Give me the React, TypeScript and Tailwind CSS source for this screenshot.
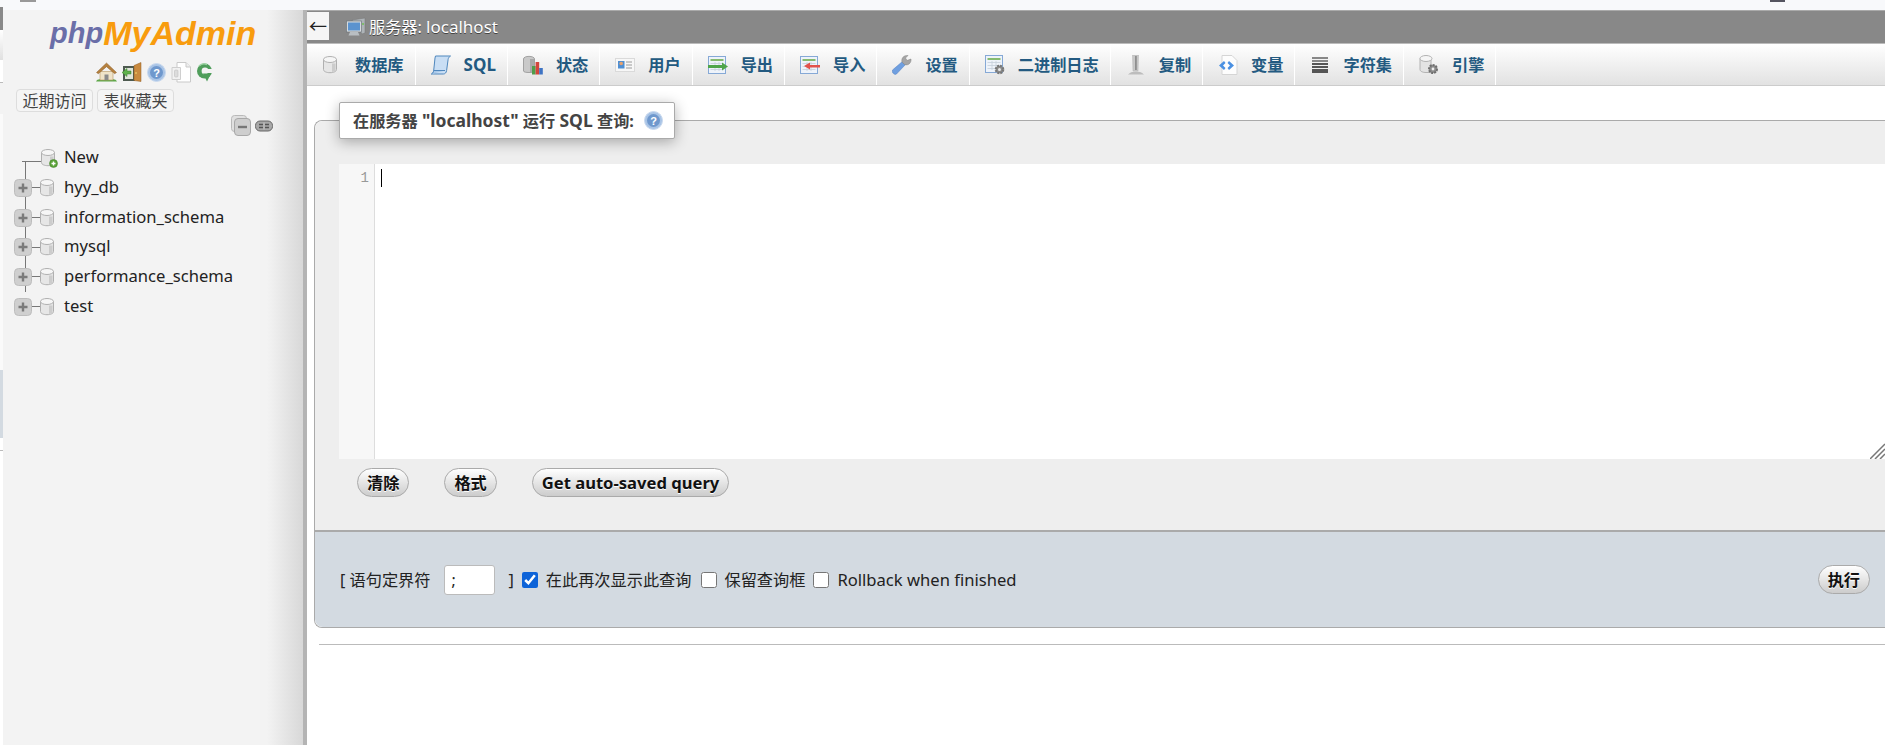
import React from 'react';

const uiFont = { fontFamily: '"Noto Sans", "Noto Sans CJK SC", sans-serif' };

// --- small icons, drawn to follow the phpMyAdmin sprite ---

const DbIcon = ({ plus = false }: { plus?: boolean }) => (
  <svg width="18" height="20" viewBox="1 0 18 20" className="shrink-0">
    <path d="M1.500 4.500v10c0 2 3 3.200 6.500 3.200s6.500-1.200 6.500-3.200v-10z" fill="#e6e6e6" stroke="#b0b0b0" />
    <ellipse cx="8" cy="4.500" rx="6.500" ry="3" fill="#f6f6f6" stroke="#b0b0b0" />
    <path d="M10 8.500h3.500v7.500l-3.500 1z" fill="#cccccc" />
    {plus && (
      <g>
        <circle cx="13.500" cy="15.500" r="4" fill="#5ca33a" stroke="#3f7f25" strokeWidth=".5" />
        <path d="M11.500 15.500h4M13.500 13.500v4" stroke="#fff" strokeWidth="1.400" />
      </g>
    )}
  </svg>
);

const PlusBox = () => (
  <svg width="18" height="18" viewBox="0 0 18 18" className="shrink-0">
    <rect x=".5" y=".5" width="17" height="17" rx="4" fill="#cfcfcf" stroke="#bdbdbd" />
    <path d="M4.500 9h9M9 4.500v9" stroke="#7a7a7a" strokeWidth="2.400" />
  </svg>
);

const HomeIcon = () => (
  <svg width="21" height="20" viewBox="0 0 21 20">
    <path d="M0 19.500c1-2 3-2.500 5-2h11c2-.5 4 0 5 2z" fill="#5fa84a" />
    <path d="M4 9.500h13V18H4z" fill="#efe3c8" stroke="#b79763" strokeWidth=".6" />
    <path d="M8.500 12.500h4V18h-4z" fill="#8a8a8a" />
    <path d="M.5 10.500 10.500 1l10 9.500-1.800 1.200-8.200-7-8.200 7z" fill="#b5813f" stroke="#8d5f29" strokeWidth=".5" />
  </svg>
);

const ExitIcon = () => (
  <svg width="20" height="20" viewBox="0 0 20 20">
    <path d="M1 4h12v15H1z" fill="#4d5a50" />
    <path d="M3 6h8v11H3z" fill="#dfe5da" />
    <path d="M12 3.500 19 .5v19l-7-1z" fill="#c98a3f" stroke="#8e5a20" strokeWidth=".5" />
    <circle cx="14" cy="11" r=".8" fill="#f7e27a" />
    <path d="M0 10.500 5 6.500v2.500h4v3H5v2.500z" fill="#5fb14c" stroke="#3b7d2c" strokeWidth=".5" />
  </svg>
);

const HelpIcon = ({ size = 19 }: { size?: number }) => (
  <svg width={size} height={size} viewBox="0 0 19 19" className="shrink-0">
    <circle cx="9.500" cy="9.500" r="9" fill="#a9c4e6" stroke="#c9d9ee" />
    <circle cx="9.500" cy="9.500" r="6.500" fill="#6f98cd" />
    <text x="9.500" y="13.500" textAnchor="middle" fontSize="11" fontWeight="700" fill="#fff" fontFamily="Liberation Sans">?</text>
  </svg>
);

const DocsIcon = () => (
  <svg width="20" height="21" viewBox="0 0 20 21">
    <path d="M6 .5h9l4.500 4.500v15H6z" fill="#fff" stroke="#c9c9c9" />
    <path d="M15 .5V5h4.500" fill="#eee" stroke="#c9c9c9" />
    <path d="M1 5.500h8.500v12H1z" fill="#f1f1f1" stroke="#cfcfcf" />
    <rect x="3.500" y="8" width="3.500" height="7" rx="1" fill="#dcdcdc" stroke="#b9b9b9" strokeWidth=".5" />
  </svg>
);

const ReloadIcon = () => (
  <svg width="17" height="20" viewBox="0 0 17 20">
    <circle cx="8.500" cy="9" r="7.500" fill="#4f9d5b" />
    <circle cx="9" cy="9" r="3.400" fill="#f3f3f3" />
    <path d="M10 7h7v4h-7z" fill="#f3f3f3" />
    <path d="M7 11.500h8L11 19.500z" fill="#4f9d5b" />
    <path d="M3 4c2-2 5-3 8-1.500" stroke="#9dd4a4" strokeWidth="1.500" fill="none" />
  </svg>
);

const CollapseIcon = () => (
  <svg width="20" height="21" viewBox="0 0 20 21">
    <rect x=".5" y=".5" width="15" height="16" rx="3" fill="#e0e0e0" stroke="#b9b9b9" />
    <rect x="3.500" y="3.500" width="16" height="17" rx="3.500" fill="#cecece" stroke="#a8a8a8" />
    <path d="M7 12h9" stroke="#777" strokeWidth="2.400" />
  </svg>
);

const LinkIcon = () => (
  <svg width="18" height="12" viewBox="0 0 18 12">
    <rect x=".5" y="1" width="17" height="10" rx="4.500" fill="#a8a8a8" stroke="#666" />
    <path d="M4 4.500h10M4 7.500h10" stroke="#555" strokeWidth="1.500" />
    <path d="M8 2.500h2v7H8z" fill="#b5b5b5" />
  </svg>
);

const ServerIcon = () => (
  <svg width="20" height="20" viewBox="0 0 20 20">
    <path d="M6 3 19 1v15l-3 1z" fill="#aeb4b8" stroke="#777" strokeWidth=".5" />
    <rect x=".5" y="4" width="15" height="11" fill="#d6dadd" stroke="#6f777c" strokeWidth=".7" />
    <rect x="2" y="5.500" width="12" height="8" fill="#5b93cf" />
    <path d="M4 15h8l1.500 3.500h-11z" fill="#b9bec2" />
    <circle cx="17" cy="7" r=".9" fill="#6ac04a" />
  </svg>
);

const ScrollIcon = () => (
  <svg width="20" height="20" viewBox="0 0 20 20">
    <path d="M4.500 1H19.500c-1.500 1-2.200 2-2.400 3.500l-1.500 11c-.3 2.200-1.500 3.500-3.200 3.500H.5c1.500-1 2-2 2.200-3.500L4 3z" fill="#c9def4" stroke="#4f87bd" />
    <path d="M.5 19c1.500-1 2-2 2.200-3.500H14" fill="#a9c9ea" stroke="#4f87bd" />
  </svg>
);

const StatusIcon = () => (
  <svg width="20" height="20" viewBox="0 0 20 20">
    <path d="M.5 4c0-3.500 11-3.500 11 0v12c0 2-11 2-11 0z" fill="#c9c9c9" stroke="#a2a2a2" />
    <path d="M7 4h4v13H7z" fill="#a9a9a9" />
    <rect x="9" y="11" width="3.600" height="8.500" fill="#4f9d4a" />
    <rect x="12.600" y="7" width="3.600" height="12.500" fill="#d3453c" />
    <rect x="16.200" y="13" width="3.600" height="6.500" fill="#3f74c4" />
  </svg>
);

const UsersIcon = () => (
  <svg width="20" height="16" viewBox="0 0 20 16">
    <rect x=".5" y="1.500" width="19" height="13" fill="#f7f7f7" stroke="#dadada" />
    <rect x="3" y="4" width="6.500" height="7.500" fill="#4f8fd3" />
    <circle cx="6.200" cy="6.500" r="1.800" fill="#e7a36f" />
    <path d="M11 5h6M11 8h6M11 11h6" stroke="#9a9a9a" strokeWidth="1" />
  </svg>
);

const TableIcon = () => (
  <>
    <rect x=".5" y=".5" width="17" height="17" fill="#eef3fa" stroke="#86a9d6" />
    <path d="M2.500 4h13" stroke="#86bb70" strokeWidth="2" />
    <path d="M2.500 7.500h13M2.500 10.500h13M2.500 13.500h13M7 6v9M11 6v9" stroke="#c5cfdb" strokeWidth=".8" />
  </>
);

const ExportIcon = () => (
  <svg width="20" height="18" viewBox="0 0 20 18">
    <TableIcon />
    <path d="M0 9h14V6.500l6 4-6 4V12H0z" fill="#4fa54a" />
  </svg>
);

const ImportIcon = () => (
  <svg width="20" height="18" viewBox="0 0 20 18">
    <TableIcon />
    <path d="M20 9H10V6.500l-6 3.500 6 3.500V11.500h10z" fill="#e2524c" />
  </svg>
);

const WrenchIcon = () => (
  <svg width="20" height="20" viewBox="0 0 20 20">
    <path d="M.5 15 11 6l3 3-9.500 10c-2 1.500-5-1.500-4-4z" fill="#6f9fe0" stroke="#4f7fc0" strokeWidth=".5" />
    <path d="M10 7c-1-4 2-7 6-6.500L13.500 3 15 5.500l4-1.500c.5 4-3 7-6.500 5.500z" fill="#a5a5a5" stroke="#808080" strokeWidth=".5" />
  </svg>
);

const BinlogIcon = () => (
  <svg width="20" height="20" viewBox="0 0 20 20">
    <TableIcon />
    <circle cx="14.500" cy="14.500" r="3.800" fill="#8a8a8a" stroke="#777" strokeWidth="2" strokeDasharray="2 1" />
    <circle cx="14.500" cy="14.500" r="1.500" fill="#e8e8e8" />
  </svg>
);

const ReplicationIcon = () => (
  <svg width="16" height="20" viewBox="0 0 16 20">
    <path d="M4.500 0h6l-.5 16H5z" fill="#c9c9c9" stroke="#b0b0b0" strokeWidth=".5" />
    <path d="M7 1h1.800v14H7z" fill="#8f8f8f" />
    <path d="M0 19.500c2-2 4-3 8-3s6 1 8 3z" fill="#bdbdbd" />
  </svg>
);

const VariablesIcon = () => (
  <svg width="20" height="20" viewBox="0 0 20 20">
    <path d="M4 .5h10l5 5v14H4z" fill="#fdfdfd" stroke="#d5d5d5" />
    <path d="M6 6 1 10.500 6 15l1.500-2-2.500-2.500L7.500 8z" fill="#4a90e2" />
    <path d="M11 6l5 4.500L11 15l-1.500-2 2.500-2.500L9.500 8z" fill="#4a90e2" />
  </svg>
);

const CharsetIcon = () => (
  <svg width="16" height="16" viewBox="0 0 16 16">
    {[0, 3, 6, 9, 12, 14].map((y) => (
      <rect key={y} x="0" y={y} width="16" height="2" fill={y < 6 ? '#888' : '#555'} />
    ))}
  </svg>
);

const EngineIcon = () => (
  <svg width="20" height="20" viewBox="0 0 20 20">
    <path d="M1 3.500v11c0 2 3 3 6 3h5V3.500z" fill="#e3e3e3" stroke="#b2b2b2" />
    <ellipse cx="7" cy="3.500" rx="6" ry="3" fill="#f5f5f5" stroke="#b2b2b2" />
    <circle cx="14" cy="14" r="4" fill="#8c8c8c" stroke="#6e6e6e" strokeWidth="2" strokeDasharray="2 1" />
    <circle cx="14" cy="14" r="1.400" fill="#eee" />
  </svg>
);

const tabs = [
  { label: '数据库', icon: <DbIcon /> },
  { label: 'SQL', icon: <ScrollIcon />, latin: true },
  { label: '状态', icon: <StatusIcon /> },
  { label: '用户', icon: <UsersIcon /> },
  { label: '导出', icon: <ExportIcon /> },
  { label: '导入', icon: <ImportIcon /> },
  { label: '设置', icon: <WrenchIcon /> },
  { label: '二进制日志', icon: <BinlogIcon /> },
  { label: '复制', icon: <ReplicationIcon /> },
  { label: '变量', icon: <VariablesIcon /> },
  { label: '字符集', icon: <CharsetIcon /> },
  { label: '引擎', icon: <EngineIcon /> },
];

const databases = ['hyy_db', 'information_schema', 'mysql', 'performance_schema', 'test'];

const PillButton = ({ children }: { children: React.ReactNode }) => (
  <button className="h-[29px] px-[9px] pt-[1px] rounded-full border border-[#aaaaaa] bg-linear-to-b from-white to-[#cccccc] text-[16.200px] leading-none font-bold text-[#111111] [text-shadow:0_1px_0_#fff]">
    {children}
  </button>
);

const Sidebar = () => (
  <aside className="w-[300px] shrink-0 bg-[linear-gradient(to_right,#f3f3f3_88%,#d8d8d8_100%)] flex flex-col">
    {/* logo */}
    <div className="h-[41px] pl-[47px] flex items-end whitespace-nowrap italic font-bold" style={{ fontFamily: '"Liberation Sans", sans-serif' }}>
      <span className="text-[29px] leading-[36px] text-[#6a6ea8]">php</span>
      <span className="text-[34px] leading-[36px] text-[#f89c0e]">MyAdmin</span>
    </div>
    <div className="h-[20px] mt-[11px] pl-[93px] flex items-center gap-[5px]">
      <HomeIcon />
      <ExitIcon />
      <HelpIcon />
      <DocsIcon />
      <ReloadIcon />
    </div>
    <div className="mt-[7px] pl-[13px] flex gap-[4px] text-[16px] text-[#444444]">
      <span className="h-[23px] w-[77px] flex items-center justify-center rounded-[4px] border border-[#dddddd] bg-[#f5f5f5]">近期访问</span>
      <span className="h-[23px] w-[77px] flex items-center justify-center rounded-[4px] border border-[#dddddd] bg-[#f5f5f5]">表收藏夹</span>
    </div>
    <div className="mt-[3px] pl-[228px] h-[21px] flex items-center gap-[4px]">
      <CollapseIcon />
      <LinkIcon />
    </div>
    {/* database tree */}
    <div className="relative mt-[7px] pl-[11px] text-[16.600px] text-[#222222]">
      <div className="absolute left-[22px] top-[19px] h-[130px] w-px bg-[#777777]" />
      <div className="h-[30px] flex items-center">
        <div className="w-[18px] shrink-0" />
        <div className="ml-[-10px] mr-0 w-[19px] h-px bg-[#777777] mt-[6px] shrink-0" />
        <DbIcon plus />
        <span className="ml-[5px] mt-[-1px]">New</span>
      </div>
      {databases.map((name) => (
        <div key={name} className="relative h-[29.700px] flex items-center">
          <PlusBox />
          <div className="w-[8px] h-px bg-[#777777] shrink-0" />
          <DbIcon />
          <span className="ml-[6px] mt-[-1px]">{name}</span>
        </div>
      ))}
    </div>
  </aside>
);

const App = () => (
  <div className="h-[745px] w-full overflow-hidden flex bg-white text-[16.200px]" style={uiFont}>
    {/* sliver of the window behind */}
    <div className="w-[3px] shrink-0 flex flex-col">
      <div className="h-[7px] bg-[#f8f9fb]" />
      <div className="h-[23px] bg-[#888888]" />
      <div className="h-[30px] bg-linear-to-b from-white to-[#e0e0e0]" />
      <div className="h-[23px] bg-white border-b border-[#bbbbbb]" />
      <div className="h-[31px] bg-[#f3f3f3]" />
      <div className="h-[256px] bg-[#fafafa]" />
      <div className="h-[68px] bg-[#d3dae1]" />
      <div className="h-[13px] bg-white border-b border-[#bbbbbb]" />
    </div>

    <div className="flex-1 min-w-0 flex flex-col">
      <div className="h-[10px] shrink-0 bg-[#f8f9fb] flex">
        <div className="ml-[17px] w-[16px] h-[2px] bg-[#999999]" />
        <div className="ml-[1734px] w-[15px] h-[2px] bg-[#555560]" />
      </div>

      <div className="flex-1 min-h-0 flex">
        <Sidebar />
        <div className="w-[4px] shrink-0 bg-[#b4b4b4]" />

        <main className="flex-1 min-w-0 flex flex-col overflow-hidden">
          {/* server breadcrumb */}
          <div className="h-[34px] shrink-0 bg-[#888888] border-t border-[#aaaaaa] border-b border-b-[#bbbbbb] flex">
            <div className="w-[22px] h-[28px] mt-px bg-[#f5f5f5] flex items-center justify-center text-[18px] text-[#222222] leading-none">←</div>
            <div className="ml-[17px] flex items-center gap-[3px] text-white [text-shadow:0_1px_0_#444]">
              <ServerIcon />
              <span>服务器: <span className="text-[17px]">localhost</span></span>
            </div>
          </div>

          {/* top menu */}
          <div className="h-[42px] shrink-0 flex bg-linear-to-b from-white to-[#e2e2e2] border-b border-[#cccccc]">
            {tabs.map((tab) => (
              <div key={tab.label} className="flex items-center pl-[16px] pr-[11px] border-r border-white">
                <div className="w-[18px] flex items-center justify-center [&>svg]:shrink-0">{tab.icon}</div>
                <span className={`ml-[14px] mt-[1px] font-bold text-[#235a81] whitespace-nowrap ${tab.latin ? 'text-[17px]' : ''}`}>{tab.label}</span>
              </div>
            ))}
          </div>

          {/* query fieldset */}
          <div className="relative mt-[34px] ml-[7px] border border-r-0 border-[#aaaaaa] rounded-tl-[8px] rounded-bl-[8px] shrink-0">
            <div className="absolute left-[24px] top-[-19px] z-10 h-[37px] w-[336px] flex items-center gap-[10px] pl-[13px] bg-white border border-[#aaaaaa] rounded-[2px] shadow-[0_3px_14px_rgba(0,0,0,0.3)] font-bold text-[#444444] whitespace-nowrap">
              <span>在服务器 <span className="text-[17.500px]">"localhost"</span> 运行 <span className="text-[17.500px]">SQL</span> 查询:</span>
              <HelpIcon />
            </div>

            <div className="h-[409px] bg-[#eeeeee] rounded-tl-[8px] pt-[43px] pl-[24px]">
              <div className="relative h-[295px] flex bg-white">
                <div className="w-[36px] bg-[#f7f7f7] border-r border-[#dddddd] pr-[5px] pt-[4px] text-right text-[14px] leading-[20px] text-[#999999]" style={{ fontFamily: '"Liberation Mono", monospace' }}>1</div>
                <div className="ml-[6px] mt-[5px] w-px h-[18px] bg-black" />
                <svg width="15" height="19" viewBox="0 0 15 19" className="absolute right-0 bottom-0">
                  <path d="M0 19 15 4M5 19 15 9M10 19l5-5" stroke="#777777" strokeWidth="1.500" />
                </svg>
              </div>
              <div className="mt-[9px] flex items-center pl-[18px]">
                <PillButton>清除</PillButton>
                <div className="ml-[35px]"><PillButton>格式</PillButton></div>
                <div className="ml-[35px]"><PillButton><span className="text-[16.600px]">Get auto-saved query</span></PillButton></div>
              </div>
            </div>

            <div className="h-[97px] bg-[#d3dae1] border-t-2 border-[#aaaaaa] rounded-bl-[8px] flex items-center pl-[25px] pr-[15px] text-[#222222] whitespace-nowrap">
              <span className="mt-[1px]">[ 语句定界符</span>
              <input readOnly value=";" className="ml-[14px] w-[51px] h-[30px] bg-white border border-[#bbbbbb] rounded-[3px] px-[6px] text-[16px] outline-none" />
              <span className="ml-[13px] mt-[1px]">]</span>
              <input type="checkbox" readOnly checked className="ml-[8px] w-[16px] h-[16px] m-0 accent-[#0d63d8]" />
              <span className="ml-[8px] mt-[1px]">在此再次显示此查询</span>
              <input type="checkbox" readOnly className="ml-[9px] w-[16px] h-[16px] m-0" />
              <span className="ml-[8px] mt-[1px]">保留查询框</span>
              <input type="checkbox" readOnly className="ml-[8px] w-[16px] h-[16px] m-0" />
              <span className="ml-[8px] mt-[1px] text-[16.600px]">Rollback when finished</span>
              <div className="ml-auto"><PillButton>执行</PillButton></div>
            </div>
          </div>

          <div className="mt-[16px] ml-[12px] border-t border-[#bbbbbb]" />
        </main>
      </div>
    </div>
  </div>
);

export default App;
